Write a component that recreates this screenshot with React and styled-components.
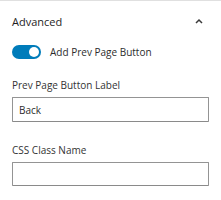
import React from "react"
import styled, { createGlobalStyle } from "styled-components"

const Global = createGlobalStyle`
  body {
    margin: 0;
    background: #fff;
    font-family: "Open Sans", "Noto Sans", sans-serif;
    color: #1e1e1e;
  }
`

const Panel = styled.div`
  width: 221px;
  border-top: 1px solid #e0e0e0;
  padding: 0 12px;
  box-sizing: border-box;
`

const Header = styled.div`
  height: 40px;
  display: flex;
  align-items: center;
  justify-content: space-between;
`

const Title = styled.span`
  font-size: 11px;
  font-weight: 500;
  color: #1e1e1e;
`

const Chevron = styled.svg`
  width: 8px;
  height: 6px;
  margin-right: 6px;
`

const ToggleRow = styled.label`
  height: 22px;
  display: flex;
  align-items: center;
  gap: 9px;
  font-size: 10px;
  color: #2c2c2c;
`

const Track = styled.span`
  position: relative;
  width: 29px;
  height: 14px;
  border-radius: 7px;
  background: ${(p) => (p.on ? "#007cba" : "#757575")};
  flex-shrink: 0;
`

const Knob = styled.span`
  position: absolute;
  top: 2px;
  ${(p) => (p.on ? "right: 2px;" : "left: 2px;")}
  width: 10px;
  height: 10px;
  border-radius: 50%;
  background: #fff;
`

const Field = styled.div`
  margin-top: ${(p) => p.top}px;
`

const Label = styled.div`
  font-size: 10px;
  line-height: 12px;
  color: #333;
  margin-bottom: 6px;
`

const Input = styled.input`
  display: block;
  width: 197px;
  height: ${(p) => p.h}px;
  box-sizing: border-box;
  border: 1px solid #949494;
  border-bottom-color: #8a8a8a;
  border-radius: 1px;
  padding: 0 6px;
  font-family: inherit;
  font-size: 10px;
  color: #2c2c2c;
  background: #fff;
  outline: none;
`

export default function App() {
  return (
    <>
      <Global />
      <Panel>
        <Header>
          <Title>Advanced</Title>
          <Chevron viewBox="0 0 8 6">
            <path d="M1 5 L4 2 L7 5" fill="none" stroke="#3a3a3a" strokeWidth="1.5" />
          </Chevron>
        </Header>
        <ToggleRow>
          <Track on>
            <Knob on />
          </Track>
          Add Prev Page Button
        </ToggleRow>
        <Field top={16}>
          <Label>Prev Page Button Label</Label>
          <Input h={25} defaultValue="Back" />
        </Field>
        <Field top={22}>
          <Label>CSS Class Name</Label>
          <Input h={24} defaultValue="" />
        </Field>
      </Panel>
    </>
  )
}
